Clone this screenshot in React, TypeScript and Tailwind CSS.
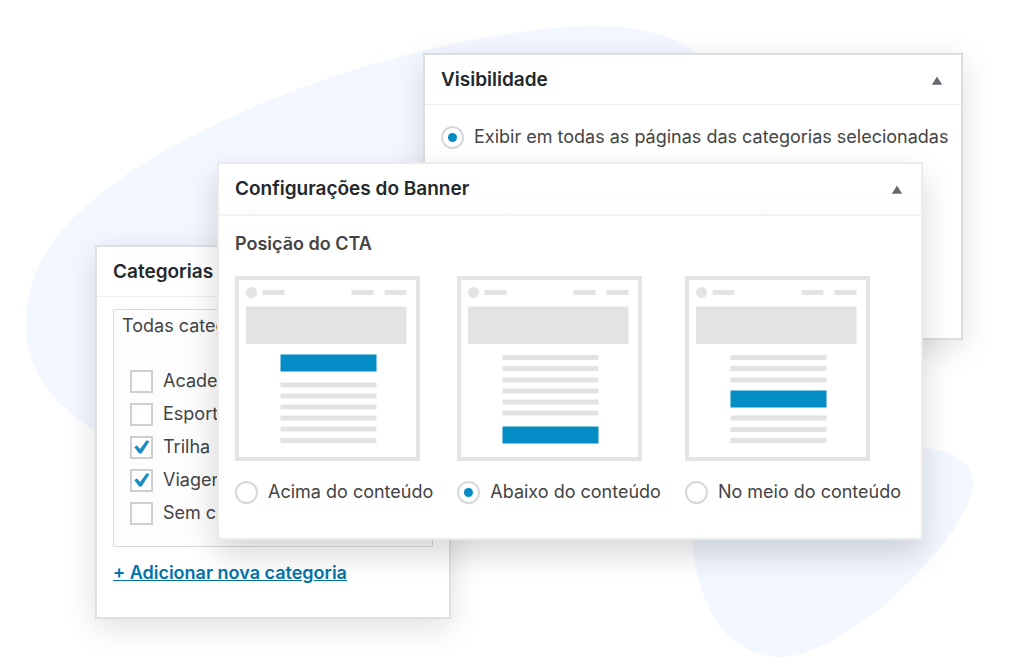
import { useState } from "react";
import type { ReactNode } from "react";

type Placement = "above" | "below" | "middle";

const placements: { id: Placement; label: string }[] = [
  { id: "above", label: "Acima do conteúdo" },
  { id: "below", label: "Abaixo do conteúdo" },
  { id: "middle", label: "No meio do conteúdo" },
];

const previews: Record<Placement, { cta: number; lines: number[] }> = {
  above: { cta: 78.5, lines: [106.5, 117.5, 128.5, 139.5, 150.5, 162] },
  below: { cta: 150.5, lines: [79, 90, 101.5, 112.5, 123.5, 134.5] },
  middle: { cta: 114.5, lines: [79, 90, 101.5, 139.5, 151, 162] },
};

const initialCategories = [
  { id: "academia", label: "Academia", checked: false },
  { id: "esportes", label: "Esportes", checked: false },
  { id: "trilha", label: "Trilha", checked: true },
  { id: "viagens", label: "Viagens", checked: true },
  { id: "sem", label: "Sem categoria", checked: false },
];

const radioClass =
  "grid size-[23px] shrink-0 appearance-none place-items-center rounded-full border-2 border-[#d6d9dc] bg-white before:size-[9px] before:rounded-full before:content-[''] checked:before:bg-[#048dc4]";

function Toggle({ label }: { label: string }) {
  return (
    <button type="button" aria-label={label} className="p-1">
      <svg viewBox="0 0 12 10" className="h-[10px] w-3 fill-[#646970]">
        <path d="M6 1.5 11.2 9.7H.8Z" />
      </svg>
    </button>
  );
}

function PanelHeader({ title, toggle, className = "" }: { title: string; toggle?: boolean; className?: string }) {
  return (
    <header className={"flex items-center justify-between pr-[14px] pl-4 " + className}>
      <h2 className="text-[19px] font-semibold whitespace-nowrap text-[#23282d]">{title}</h2>
      {toggle && <Toggle label={title} />}
    </header>
  );
}

function Panel({ className, children }: { className: string; children: ReactNode }) {
  return <section className={"absolute border-2 bg-white " + className}>{children}</section>;
}

function Preview({ placement }: { placement: Placement }) {
  const { cta, lines } = previews[placement];
  return (
    <svg viewBox="0 0 185 185" className="size-[185px] fill-[#e3e3e3]" aria-hidden="true">
      <rect x="2" y="2" width="181" height="181" fill="#fff" stroke="#e4e4e4" strokeWidth="4" />
      <circle cx="16.5" cy="16.5" r="5.5" />
      <rect x="27.5" y="14" width="22" height="5" />
      <rect x="116.5" y="14" width="22" height="5" />
      <rect x="149.5" y="14" width="22" height="5" />
      <rect x="11" y="30.5" width="160.5" height="37.5" />
      {lines.map((y) => (
        <rect key={y} x="45.5" y={y} width="96" height="5" />
      ))}
      <rect x="45.5" y={cta} width="96" height="17" fill="#048dc4" />
    </svg>
  );
}

function Backdrop() {
  return (
    <svg viewBox="0 0 1020 672" className="absolute top-0 left-0 h-[672px] w-[1020px] fill-[#f3f7ff]" aria-hidden="true">
      <path d="M26 325C26 258 66 216 133 170C205 122 320 76 410 54C480 37 545 26 590 26C640 26 670 34 695 52L760 120L700 300L300 500C220 490 140 460 95 431C50 402 26 368 26 325Z" />
      <path d="M880 448C935 442 973 455 973 483C973 512 935 558 890 600C845 638 805 657 782 657C715 657 693 585 692 530L700 470Z" />
    </svg>
  );
}

export default function App() {
  const [placement, setPlacement] = useState<Placement>("below");
  const [categories, setCategories] = useState(initialCategories);

  const toggleCategory = (id: string) =>
    setCategories((items) => items.map((c) => (c.id === id ? { ...c, checked: !c.checked } : c)));

  return (
    <main className="relative min-h-screen overflow-hidden bg-white font-['Inter','Liberation_Sans',sans-serif] text-[18px] leading-6 text-[#444]">
      <Backdrop />

      <Panel className="top-[245px] left-[95px] w-[356px] border-[#dedfe1] pb-8 shadow-[0_8px_30px_rgba(0,0,0,0.13)]">
        <PanelHeader title="Categorias" className="h-[50px] border-b border-[#eee]" />
        <div className="px-4 pt-3">
          <div className="border border-[#d8dadc] bg-[#fdfdfd] px-2 pt-1 pb-[21px]">
            <p>Todas categorias</p>
            <ul className="mt-[31px] flex flex-col gap-[9px] pl-2">
              {categories.map((c) => (
                <li key={c.id}>
                  <label className="flex items-center gap-[10px] whitespace-nowrap">
                    <span className="grid">
                      <input
                        type="checkbox"
                        checked={c.checked}
                        onChange={() => toggleCategory(c.id)}
                        className="peer col-start-1 row-start-1 size-[23px] appearance-none border-2 border-[#ccd0d4] bg-white"
                      />
                      <svg
                        viewBox="0 0 23 23"
                        className="pointer-events-none invisible col-start-1 row-start-1 size-[23px] fill-[#1e8cbe] peer-checked:visible"
                        aria-hidden="true"
                      >
                        <path d="M4.2 11 7.2 9.4 10 13 16.6 4.2 19.4 5.2 11.6 17.4 9 17.4Z" />
                      </svg>
                    </span>
                    {c.label}
                  </label>
                </li>
              ))}
            </ul>
          </div>
          <a href="#nova-categoria" className="mt-[14px] inline-block font-semibold text-[#0073aa] underline">
            + Adicionar nova categoria
          </a>
        </div>
      </Panel>

      <Panel className="top-[53px] left-[423px] min-h-[287px] w-[540px] border-[#dcdddf] shadow-[0_8px_30px_rgba(0,0,0,0.13)]">
        <PanelHeader title="Visibilidade" toggle className="h-[50px] border-b border-[#eee]" />
        <label className="flex items-center gap-[10px] px-4 pt-5 whitespace-nowrap">
          <input type="radio" name="visibilidade" defaultChecked className={radioClass} />
          Exibir em todas as páginas das categorias selecionadas
        </label>
      </Panel>

      <Panel className="top-[162px] left-[217px] w-[706px] border-[#ebebeb] pb-[34px] shadow-[0_14px_30px_rgba(0,0,0,0.16)]">
        <PanelHeader
          title="Configurações do Banner"
          toggle
          className="h-[52px] border-b-2 border-[#f3f3f3] bg-linear-to-b from-white from-60% to-[#fcfcfc]"
        />
        <fieldset className="px-4 pt-4">
          <legend className="float-left w-full font-semibold">Posição do CTA</legend>
          <div className="clear-both flex gap-6 pt-5">
            {placements.map(({ id, label }) => (
              <label key={id} className="flex flex-col gap-[19px]">
                <Preview placement={id} />
                <span className="flex items-center gap-[10px] whitespace-nowrap">
                  <input
                    type="radio"
                    name="posicao"
                    checked={placement === id}
                    onChange={() => setPlacement(id)}
                    className={radioClass}
                  />
                  {label}
                </span>
              </label>
            ))}
          </div>
        </fieldset>
      </Panel>
    </main>
  );
}
